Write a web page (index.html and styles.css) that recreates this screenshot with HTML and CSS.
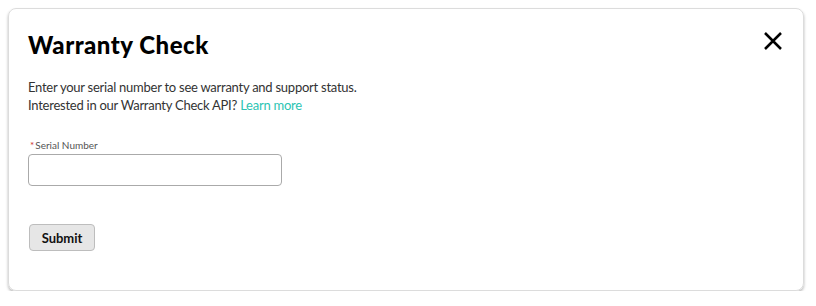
FILE: index.html
```html
<!DOCTYPE html>
<html>
<head>
<meta charset="utf-8">
<link rel="stylesheet" href="styles.css">
</head>
<body>
<div class="card">
  <div class="header">
    <h1 class="title">Warranty Check</h1>
    <button class="close" aria-label="Close">
      <svg width="20" height="20" viewBox="0 0 20 20"><path d="M2 2 L18 18 M18 2 L2 18" stroke="#000" stroke-width="2.5" fill="none"/></svg>
    </button>
  </div>
  <p class="intro">Enter your serial number to see warranty and support status.<br>Interested in our Warranty Check API? <a class="link" href="#">Learn more</a></p>
  <div class="field">
    <label class="label"><span class="req">*</span>Serial Number</label>
    <input class="input" type="text">
  </div>
  <button class="submit">Submit</button>
</div>
</body>
</html>
```
FILE: styles.css
```css
html, body { margin: 0; padding: 0; background: #fff; }
body { padding: 8px 12px 0 8px; font-family: Lato, "Noto Sans", sans-serif; }
.card {
  box-sizing: border-box;
  width: 796px;
  height: 283px;
  border: 1px solid #dcdcdc;
  border-radius: 8px;
  box-shadow: 0 2px 3px rgba(0,0,0,0.28);
  padding: 21px 20px 0 19px;
  display: flex;
  flex-direction: column;
  align-items: flex-start;
}
.header { display: flex; justify-content: space-between; align-items: flex-start; width: 100%; }
.title { margin: 0; font-size: 24px; font-weight: 900; line-height: 30px; color: #000; letter-spacing: 0.5px; }
.close { border: 0; background: none; padding: 0; margin: 1px 0 0 0; width: 20px; height: 20px; cursor: pointer; }
.close svg { display: block; }
.intro { margin: 18px 0 0 0; font-size: 13px; line-height: 18px; color: #333; letter-spacing: -0.25px; }
.link { color: #2bc4b3; text-decoration: none; }
.field { margin-top: 25px; display: flex; flex-direction: column; }
.label { font-size: 10px; line-height: 12px; color: #555; margin-left: 2px; }
.req { color: #d0312d; margin-right: 1px; }
.input { box-sizing: border-box; width: 254px; height: 32px; margin-top: 3px; border: 1px solid #aaa; border-radius: 4px; }
.submit {
  box-sizing: border-box;
  margin-top: 38px; margin-left: 1px;
  width: 66px; height: 27px;
  background: #e6e6e6;
  border: 1px solid #bdbdbd;
  border-radius: 4px;
  font-family: Lato, sans-serif;
  font-weight: 700;
  font-size: 13px;
  color: #111;
}
```
